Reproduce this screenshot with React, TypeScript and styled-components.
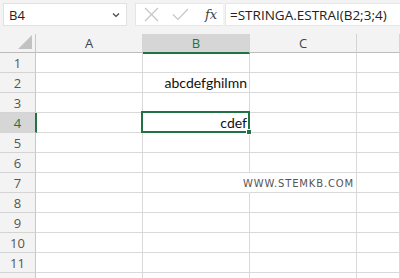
import React from "react";
import styled, { createGlobalStyle } from "styled-components";

const GREEN = "#217346";
const GRID = "#d9d9d9";

const Global = createGlobalStyle`
  html, body { margin: 0; padding: 0; background: #ffffff; overflow: hidden; }
  * { box-sizing: border-box; }
`;

const Page = styled.div`
  width: 400px;
  height: 278px;
  overflow: hidden;
  background: #f3f3f3;
  font-family: "Open Sans", "Noto Sans", sans-serif;
`;

const TopBar = styled.div`
  height: 34px;
  display: flex;
  align-items: flex-start;
  padding: 3px 0 0 3px;
  gap: 8px;
`;

const NameBox = styled.div`
  width: 124px;
  height: 23px;
  background: #fff;
  border: 1px solid #e1e1e1;
  display: flex;
  align-items: center;
  justify-content: space-between;
  padding: 0 6px 0 5px;
  font-size: 13px;
  color: #222;
`;

const FormulaArea = styled.div`
  flex: 1;
  height: 23px;
  display: flex;
  gap: 2px;
`;

const IconBox = styled.div`
  width: 88px;
  height: 23px;
  background: #fff;
  border: 1px solid #e6e6e6;
  border-right: none;
  display: flex;
  align-items: center;
  padding-left: 8px;
  gap: 13px;
`;

const Fx = styled.span`
  font-family: "DejaVu Serif", "Liberation Serif", serif;
  font-style: italic;
  font-size: 13px;
  color: #444;
  margin-left: 3px;
`;

const FormulaInput = styled.div`
  flex: 1;
  height: 23px;
  background: #fff;
  border: 1px solid #e6e6e6;
  border-right: none;
  display: flex;
  align-items: center;
  padding-left: 4px;
  font-size: 13.5px;
  color: #222;
  white-space: nowrap;
`;

const Sheet = styled.div`
  display: grid;
  grid-template-columns: 36px 107px 107px 107px 1fr;
  grid-template-rows: 19px;
  grid-auto-rows: 20px;
  background: #fff;
`;

const Corner = styled.div`
  background: #f3f3f3;
  border-right: 1px solid #c8c8c8;
  border-bottom: 1px solid #bdbdbd;
  position: relative;
`;

const Triangle = styled.div`
  position: absolute;
  right: 3px;
  bottom: 3px;
  width: 0;
  height: 0;
  border-left: 14px solid transparent;
  border-bottom: 14px solid #c2c2c2;
`;

const ColHead = styled.div<{ $sel?: boolean }>`
  background: ${(p) => (p.$sel ? "#d6d6d6" : "#f3f3f3")};
  border-right: 1px solid #d4d4d4;
  border-bottom: ${(p) => (p.$sel ? `2px solid ${GREEN}` : "1px solid #bdbdbd")};
  margin-bottom: ${(p) => (p.$sel ? "-1px" : "0")};
  display: flex;
  align-items: center;
  justify-content: center;
  font-size: 13px;
  color: ${(p) => (p.$sel ? GREEN : "#444")};
  position: relative;
  z-index: 1;
`;

const RowHead = styled.div<{ $sel?: boolean }>`
  background: ${(p) => (p.$sel ? "#d6d6d6" : "#f3f3f3")};
  border-right: ${(p) => (p.$sel ? `2px solid ${GREEN}` : "1px solid #c8c8c8")};
  margin-right: ${(p) => (p.$sel ? "-1px" : "0")};
  border-bottom: 1px solid #d4d4d4;
  display: flex;
  align-items: center;
  justify-content: center;
  font-size: 13px;
  color: ${(p) => (p.$sel ? GREEN : "#555")};
  position: relative;
  z-index: 1;
`;

const Cell = styled.div<{ $noRight?: boolean }>`
  border-right: ${(p) => (p.$noRight ? "1px solid transparent" : `1px solid ${GRID}`)};
  border-bottom: 1px solid ${GRID};
  display: flex;
  align-items: flex-end;
  justify-content: flex-end;
  padding: 0 2px 1px 0;
  position: relative;
  white-space: nowrap;
  font-family: "Lato", "Liberation Sans", sans-serif;
  font-size: 14px;
  color: #111;
`;

const Selection = styled.div`
  position: absolute;
  left: -2px;
  top: -2px;
  right: -1px;
  bottom: -1px;
  border: 2px solid ${GREEN};
  pointer-events: none;
  z-index: 2;
`;

const Handle = styled.div`
  position: absolute;
  right: -4px;
  bottom: -4px;
  width: 6px;
  height: 6px;
  background: ${GREEN};
  border: 1px solid #fff;
`;

const Watermark = styled.span`
  font-family: "DejaVu Sans", "Verdana", sans-serif;
  font-size: 10px;
  letter-spacing: 0.85px;
  color: #555;
  padding-bottom: 2px;
`;

const Chevron = () => (
  <svg width="8" height="6" viewBox="0 0 8 6">
    <path d="M1 1.5 L4 4.5 L7 1.5" fill="none" stroke="#444" strokeWidth="1.2" />
  </svg>
);

const XIcon = () => (
  <svg width="15" height="15" viewBox="0 0 15 15">
    <path d="M1 1 L14 14 M14 1 L1 14" stroke="#c4c4c4" strokeWidth="1.1" fill="none" />
  </svg>
);

const CheckIcon = () => (
  <svg width="17" height="13" viewBox="0 0 17 13">
    <path d="M1 6.5 L6 11.5 L16 1" stroke="#c4c4c4" strokeWidth="1.1" fill="none" />
  </svg>
);

const cols = ["A", "B", "C", ""];
const rows = Array.from({ length: 12 }, (_, i) => i + 1);

const content: Record<string, React.ReactNode> = {
  "2-1": "abcdefghilmn",
  "4-1": "cdef",
};

export default function App() {
  return (
    <Page>
      <Global />
      <TopBar>
        <NameBox>
          <span>B4</span>
          <Chevron />
        </NameBox>
        <FormulaArea>
          <IconBox>
            <XIcon />
            <CheckIcon />
            <Fx>fx</Fx>
          </IconBox>
          <FormulaInput>=STRINGA.ESTRAI(B2;3;4)</FormulaInput>
        </FormulaArea>
      </TopBar>
      <Sheet>
        <Corner>
          <Triangle />
        </Corner>
        {cols.map((c, i) => (
          <ColHead key={c + i} $sel={c === "B"}>
            {c}
          </ColHead>
        ))}
        {rows.map((r) => (
          <React.Fragment key={r}>
            <RowHead $sel={r === 4}>{r < 12 ? r : ""}</RowHead>
            {cols.map((c, ci) => (
              <Cell key={ci} $noRight={r === 7 && ci === 1}>
                {content[`${r}-${ci}`]}
                {r === 7 && ci === 2 && <Watermark>WWW.STEMKB.COM</Watermark>}
                {r === 4 && ci === 1 && (
                  <Selection>
                    <Handle />
                  </Selection>
                )}
              </Cell>
            ))}
          </React.Fragment>
        ))}
      </Sheet>
    </Page>
  );
}
